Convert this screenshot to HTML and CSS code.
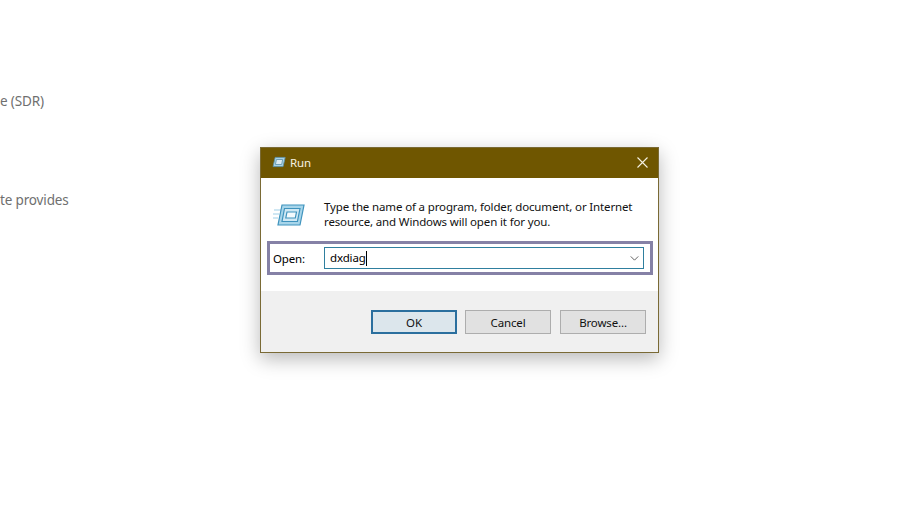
FILE: index.html
```html
<!DOCTYPE html>
<html lang="en">
<head>
    <meta charset="UTF-8">
    <title>Run</title>
    <link rel="stylesheet" href="styles.css">
</head>
<body>
    <!-- Settings page behind the dialog, cut off by the crop -->
    <div class="page-text">
        <p class="line-sdr">e (SDR)</p>
        <p class="line-provides">te provides</p>
    </div>

    <div class="dialog">
        <div class="titlebar">
            <svg class="title-icon" viewBox="0 0 18 14">
                <path d="M5 1.500h12l-2.500 11H2.500z" fill="#a9d3e6" stroke="#5d93ad" stroke-width="1"/>
                <path d="M6.500 4h7.500l-1.200 6H5.300z" fill="#dcebf2" stroke="#5d93ad" stroke-width="1"/>
            </svg>
            <span class="title-text">Run</span>
            <svg class="close-icon" viewBox="0 0 11 11">
                <path d="M.5.5l10 10M10.500.5l-10 10" stroke="#f5f1e2" stroke-width="1.100" fill="none"/>
            </svg>
        </div>
        <div class="content">
            <div class="intro">
                <svg class="run-icon" viewBox="0 0 32 24">
                    <path d="M1 7h7M0 11h6M0 15h5" stroke="#9fd0e8" stroke-width="1.200" fill="none"/>
                    <path d="M9 2h22l-4 20H5z" fill="#a7d5ea" stroke="#3f93bd" stroke-width="1.200"/>
                    <path d="M11.500 5.500h15.500l-2.600 13H9z" fill="#cfe8f4" stroke="#3f93bd" stroke-width="1.200"/>
                    <path d="M14 9h9.500l-1.200 6H12.800z" fill="#f3fafd" stroke="#3f93bd" stroke-width="1.200"/>
                </svg>
                <p class="message">Type the name of a program, folder, document, or Internet<br>resource, and Windows will open it for you.</p>
            </div>
            <div class="open-row">
                <label class="open-label">Open:</label>
                <div class="open-input">
                    <span class="open-value">dxdiag</span><span class="caret"></span>
                    <svg class="chevron" viewBox="0 0 10 6">
                        <path d="M.5.5L5 5 9.500.5" stroke="#444" stroke-width="1" fill="none"/>
                    </svg>
                </div>
            </div>
        </div>
        <div class="footer">
            <button class="btn btn-default">OK</button>
            <button class="btn">Cancel</button>
            <button class="btn btn-browse">Browse...</button>
        </div>
    </div>
</body>
</html>
```

FILE: styles.css
```css
/* Page behind the dialog */
body {
    margin: 0;
    height: 512px;
    overflow: hidden;
    background-color: #fff;
    font-family: "Noto Sans", "Open Sans", sans-serif;
    color: #000;
}
.page-text {
    padding-top: 91px;
    color: #6f6f6f;
    font-size: 13.5px;
    letter-spacing: -0.15px;
    line-height: 20px;
}
.page-text p {
    margin: 0;
}
.line-provides {
    padding-top: 79px;
}

/* Run dialog */
.dialog {
    position: absolute;
    left: 260px;
    top: 147px;
    width: 397px;
    height: 204px;
    display: flex;
    flex-direction: column;
    border: 1px solid #7a6a35;
    background-color: #fff;
    box-shadow: 0 6px 18px rgba(0, 0, 0, 0.28);
    font-size: 11.5px;
    letter-spacing: -0.14px;
}
.titlebar {
    height: 30px;
    flex: none;
    box-sizing: border-box;
    display: flex;
    align-items: center;
    padding: 0 10px 2px 10px;
    background-color: #6f5600;
    color: #f5f1e2;
}
.title-icon {
    width: 15px;
    height: 12px;
    margin-right: 4px;
}
.title-text {
    flex: 1;
}
.close-icon {
    width: 11px;
    height: 11px;
}
.content {
    flex: 1;
    padding: 22px 5px 0 6px;
}
.intro {
    display: flex;
    height: 41px;
}
.run-icon {
    width: 32px;
    height: 24px;
    margin: 3px 0 0 6px;
}
.message {
    margin: -1px 0 0 19px;
    line-height: 15px;
    color: #111;
    white-space: nowrap;
}
.open-row {
    height: 28px;
    display: flex;
    align-items: center;
    border: 3px solid #8581a6;
    padding-right: 6px;
}
.open-label {
    width: 51px;
    padding-left: 3px;
}
.open-input {
    flex: 1;
    height: 20px;
    display: flex;
    align-items: center;
    padding: 0 4px 0 5px;
    border: 1px solid #2f7f9f;
}
.open-value {
    margin-top: -1px;
}
.caret {
    width: 1px;
    height: 15px;
    background-color: #000;
}
.chevron {
    width: 9px;
    height: 5px;
    margin-left: auto;
}
.footer {
    height: 61px;
    flex: none;
    display: flex;
    gap: 8px;
    padding: 19px 12px 0 110px;
    box-sizing: border-box;
    background-color: #f0f0f0;
}
.btn {
    width: 86px;
    height: 24px;
    padding: 0;
    border: 1px solid #adadad;
    background-color: #e1e1e1;
    color: #111;
    font: inherit;
    letter-spacing: inherit;
}
.btn-default {
    border: 2px solid #2b6f9e;
    background-color: #dce6ec;
}
.btn-browse {
    margin-left: 1px;
}
```
